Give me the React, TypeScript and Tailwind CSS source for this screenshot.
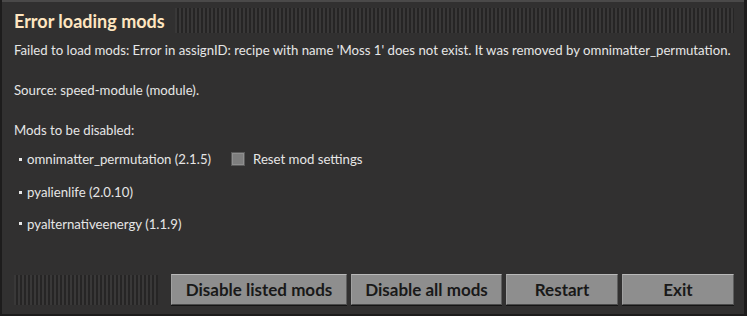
import React from "react";

const stripes =
  "bg-[repeating-linear-gradient(90deg,#393838_0px,#393838_2px,#262525_2px,#262525_4px)]";

function Btn({ label, w }: { label: string; w: string }) {
  return (
    <div
      className={`${w} h-[31px] flex items-center justify-center bg-[#8e8e8e] border-t border-t-[#b9b9b9] border-l border-l-[#a0a0a0] border-r border-r-[#5e5e5e] border-b border-b-[#4a4a4a] shadow-[0_1px_0_#151515] text-[#191919] font-bold text-[17px] leading-none`}
    >
      {label}
    </div>
  );
}

function Item({ children, h }: { children: React.ReactNode; h: string }) {
  return (
    <div className={`flex items-center ${h}`}>
      <span className="w-[3px] h-[3px] bg-[#e6e6e6] ml-[5px] mr-[5px]" />
      {children}
    </div>
  );
}

export default function App() {
  return (
    <div
      className="w-[747px] h-[316px] bg-[#1d1c1c] pl-[2px] pr-[3px] pb-[2px]"
      style={{ fontFamily: "Lato, 'Noto Sans', sans-serif" }}
    >
      <div className="w-full h-full bg-[#313030] border-t-2 border-t-[#4a4949] flex flex-col">
        <div className="flex items-center h-[31px] mt-[3px] pl-[12px] pr-[10px]">
          <span className="text-[#ffe6c0] font-bold text-[18px] leading-none">
            Error loading mods
          </span>
          <div className={`flex-1 ml-[10px] h-[25px] ${stripes}`} />
        </div>
        <div className="pl-[12px] text-[#e6e6e6] text-[13.2px] leading-[20px] mt-[4px]">
          <div className="whitespace-nowrap">
            Failed to load mods: Error in assignID: recipe with name 'Moss 1' does not
            exist. It was removed by omnimatter_permutation.
          </div>
          <div className="h-[20px]" />
          <div>Source: speed-module (module).</div>
          <div className="h-[20px]" />
          <div>Mods to be disabled:</div>
          <Item h="h-[30px] mt-[4px]">
            <span>omnimatter_permutation (2.1.5)</span>
            <span className="ml-[20px] w-[14px] h-[14px] bg-[#7e7e7e] border border-[#5a5a5a] shadow-[inset_0_0_0_1px_#8f8f8f]" />
            <span className="ml-[8px]">Reset mod settings</span>
          </Item>
          <Item h="h-[32px] mt-[2px]">
            <span>pyalienlife (2.0.10)</span>
          </Item>
          <Item h="h-[31px]">
            <span>pyalternativeenergy (1.1.9)</span>
          </Item>
        </div>
        <div className="mt-auto mb-[9px] flex items-center pl-[12px] gap-[4px]">
          <div className={`w-[144px] h-[30px] mr-[9px] ${stripes}`} />
          <Btn label="Disable listed mods" w="w-[176px]" />
          <Btn label="Disable all mods" w="w-[151px]" />
          <Btn label="Restart" w="w-[112px]" />
          <Btn label="Exit" w="w-[112px]" />
        </div>
      </div>
    </div>
  );
}
